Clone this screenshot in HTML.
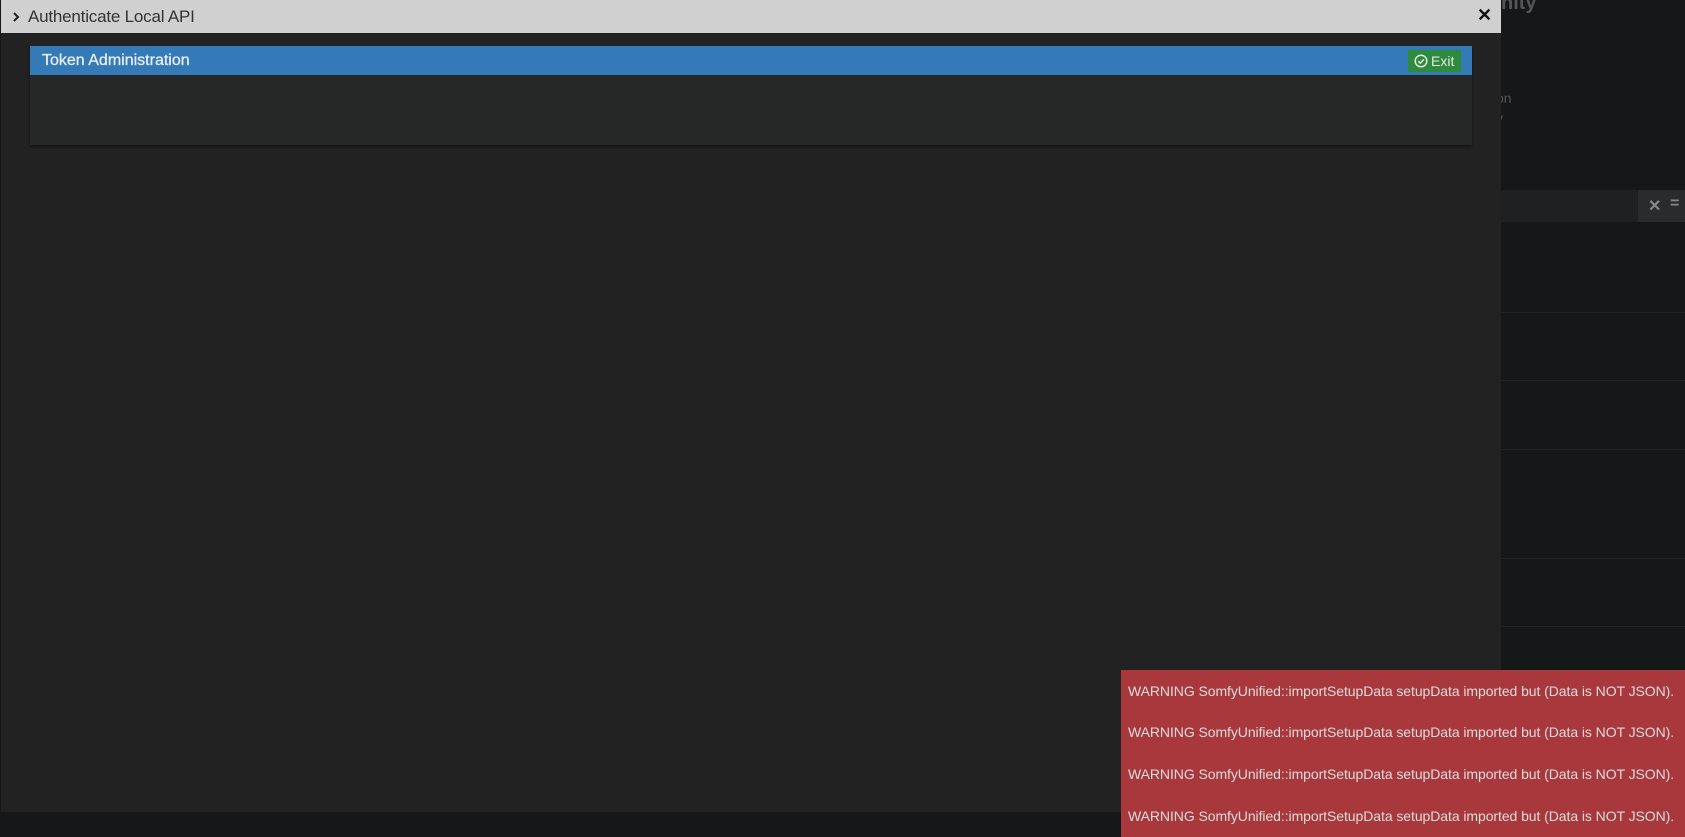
<!DOCTYPE html>
<html><head><meta charset="utf-8"><style>
body{margin:0;width:1685px;height:837px;background:#161719;font-family:"Liberation Sans",sans-serif;position:relative;overflow:hidden}
.abs{position:absolute}
</style></head><body>
<div class="abs" style="left:1501px;top:-8px;color:#555;font-size:20px;font-weight:bold">nity</div>
<div class="abs" style="left:1496px;top:90px;color:#555;font-size:14px">on</div>
<div class="abs" style="left:1496px;top:110px;color:#555;font-size:14px">y</div>
<div class="abs" style="left:1501px;top:190px;width:137px;height:32px;background:#1f2022"></div>
<div class="abs" style="left:1638px;top:190px;width:47px;height:32px;background:#2a2b2d;color:#888;font-size:16px;font-weight:bold"><span style="position:absolute;left:10px;top:6px">✕</span><span style="position:absolute;left:32px;top:5px">=</span></div>
<div class="abs" style="left:1501px;top:312px;width:184px;height:1px;background:#222"></div>
<div class="abs" style="left:1501px;top:380px;width:184px;height:1px;background:#222"></div>
<div class="abs" style="left:1501px;top:449px;width:184px;height:1px;background:#222"></div>
<div class="abs" style="left:1501px;top:558px;width:184px;height:1px;background:#222"></div>
<div class="abs" style="left:1501px;top:626px;width:184px;height:1px;background:#222"></div>

<div class="abs" style="left:1px;top:0;width:1500px;height:812px;background:#222">
  <div style="height:33px;background:#d0d0d0;position:relative">
    <svg class="abs" style="left:11px;top:12px" width="8" height="10" viewBox="0 0 8 10"><path d="M2 1l4 4-4 4" fill="none" stroke="#222" stroke-width="2"/></svg>
    <span class="abs" style="left:27px;top:7px;font-size:17px;color:#333;letter-spacing:-0.2px">Authenticate Local API</span>
    <span class="abs" style="left:1476px;top:5px;font-size:18px;font-weight:bold;color:#111">✕</span>
  </div>
  <div class="abs" style="left:29px;top:46px;width:1442px;height:99px;background:#262828;box-shadow:0 2px 3px rgba(0,0,0,.4)">
    <div style="height:29px;background:#337ab7;position:relative">
      <span class="abs" style="left:12px;top:6px;font-size:16px;color:#e8eef5;-webkit-text-stroke:0.3px #e8eef5">Token Administration</span>
      <div class="abs" style="left:1378px;top:4px;width:53px;height:22px;background:#2e8b3e;color:#e6e6e6;font-size:14px">
        <svg class="abs" style="left:6px;top:4px" width="14" height="14" viewBox="0 0 14 14"><circle cx="7" cy="7" r="5.8" fill="none" stroke="#e6e6e6" stroke-width="1.5"/><path d="M4.3 7.2l2 2 3.5-3.8" fill="none" stroke="#e6e6e6" stroke-width="1.5"/></svg>
        <span class="abs" style="left:23px;top:3px">Exit</span>
      </div>
    </div>
  </div>
</div>

<div class="abs" style="left:1121px;top:670px;width:564px;height:167px;background:#a9383d;color:#ddd;font-size:14px;letter-spacing:-0.07px">
  <div class="abs" style="left:7px;top:13px;white-space:nowrap">WARNING SomfyUnified::importSetupData setupData imported but (Data is NOT JSON).</div>
  <div class="abs" style="left:7px;top:54px;white-space:nowrap">WARNING SomfyUnified::importSetupData setupData imported but (Data is NOT JSON).</div>
  <div class="abs" style="left:7px;top:96px;white-space:nowrap">WARNING SomfyUnified::importSetupData setupData imported but (Data is NOT JSON).</div>
  <div class="abs" style="left:7px;top:138px;white-space:nowrap">WARNING SomfyUnified::importSetupData setupData imported but (Data is NOT JSON).</div>
</div>
</body></html>
